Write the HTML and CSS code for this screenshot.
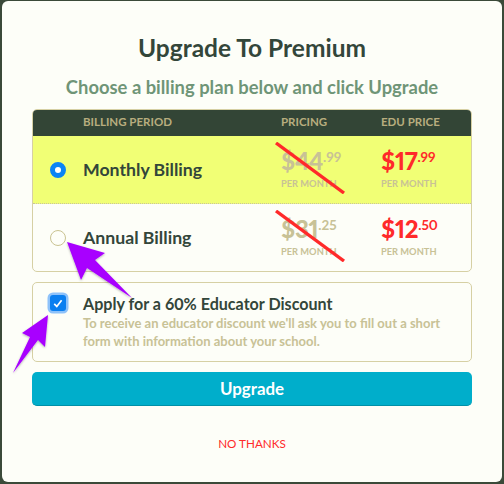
FILE: index.html
```html
<!DOCTYPE html>
<html lang="en">
<head>
    <meta charset="UTF-8">
    <meta name="viewport" content="width=device-width, initial-scale=1.0">
    <title>Upgrade To Premium</title>
    <link rel="stylesheet" href="styles.css">
</head>
<body>
    <div class="modal">
        <h1 class="modal-title">Upgrade To Premium</h1>
        <h2 class="modal-subtitle">Choose a billing plan below and click Upgrade</h2>

        <div class="plans">
            <div class="plans-head plan-grid">
                <span class="col-period">BILLING PERIOD</span>
                <span>PRICING</span>
                <span>EDU PRICE</span>
            </div>
            <div class="plan plan-grid selected">
                <span class="radio"></span>
                <span class="plan-name">Monthly Billing</span>
                <div class="price old">
                    <div class="amount">$44<sup>.99</sup></div>
                    <div class="per">PER MONTH</div>
                    <svg class="slash" width="70" height="52" viewBox="0 0 70 52"><path d="M1 1 L69 51" stroke="#ff2a2a" stroke-width="3.4"/></svg>
                </div>
                <div class="price">
                    <div class="amount">$17<sup>.99</sup></div>
                    <div class="per">PER MONTH</div>
                </div>
            </div>
            <div class="plan plan-grid">
                <span class="radio"></span>
                <span class="plan-name">Annual Billing</span>
                <div class="price old">
                    <div class="amount">$31<sup>.25</sup></div>
                    <div class="per">PER MONTH</div>
                    <svg class="slash" width="70" height="52" viewBox="0 0 70 52"><path d="M1 1 L69 51" stroke="#ff2a2a" stroke-width="3.4"/></svg>
                </div>
                <div class="price">
                    <div class="amount">$12<sup>.50</sup></div>
                    <div class="per">PER MONTH</div>
                </div>
            </div>
        </div>

        <div class="discount">
            <span class="checkbox">
                <svg width="10" height="9" viewBox="0 0 10 9"><path d="M1.2 4.8 L3.8 7.4 L8.6 1.2" fill="none" stroke="#fff" stroke-width="1.7"/></svg>
            </span>
            <div>
                <div class="discount-title">Apply for a 60% Educator Discount</div>
                <p class="discount-text">To receive an educator discount we'll ask you to fill out a short form with information about your school.</p>
            </div>
        </div>

        <button class="btn-upgrade">Upgrade</button>
        <a class="no-thanks">NO THANKS</a>
    </div>

    <!-- annotation arrows drawn on top of the screenshot -->
    <svg class="arrows" width="504" height="484" viewBox="0 0 504 484">
        <defs>
            <filter id="arrow-shadow" x="-20%" y="-20%" width="140%" height="140%">
                <feDropShadow dx="0" dy="1" stdDeviation="1" flood-color="#000" flood-opacity="0.3"/>
            </filter>
        </defs>
        <g fill="#a800ff" filter="url(#arrow-shadow)">
            <path d="M67 242 L105 253 L95 260 L132 298 L87 268 L81 280 Z"/>
            <path d="M48 315 L22 333 L30 337 L13 373 L38 340 L45 347 Z"/>
        </g>
    </svg>
</body>
</html>
```

FILE: styles.css
```css
* {
    box-sizing: border-box;
}
html, body {
    height: 100%;
}
body {
    margin: 0;
    padding: 1px 2px 2px 2px;
    background-color: #3b4a39;
    font-family: Lato, "Open Sans", Arial, sans-serif;
    overflow: hidden;
}
.modal {
    height: 100%;
    background-color: #fdfef8;
    border-radius: 6px;
    padding: 34px 30px 0 30px;
}
.modal-title {
    margin: 0;
    font-size: 24.5px;
    line-height: 26px;
    font-weight: 700;
    color: #33463a;
    text-align: center;
}
.modal-subtitle {
    margin: 15px 0 0 0;
    font-size: 18.4px;
    line-height: 22px;
    font-weight: 700;
    color: #6f9577;
    text-align: center;
}
.plans {
    margin-top: 11px;
    border: 1px solid #d6d0a4;
    border-radius: 5px;
    overflow: hidden;
}
.plan-grid {
    display: grid;
    grid-template-columns: 50px 198px 100px 1fr;
    align-items: center;
}
.plans-head {
    height: 26px;
    padding-bottom: 3px;
    background-color: #334536;
    color: #b8ad7e;
    font-size: 11.5px;
    font-weight: 700;
    grid-template-columns: 248px 100px 1fr;
}
.col-period {
    padding-left: 50px;
}
.plan {
    height: 67px;
    position: relative;
}
.plan.selected {
    height: 68px;
    background-color: #f1ff75;
    border-bottom: 1px dotted #c9c49a;
}
.radio {
    width: 16px;
    height: 16px;
    margin-left: 17px;
    border: 1px solid #c9c392;
    border-radius: 50%;
    background-color: #fdfef8;
}
.selected .radio {
    border: 5px solid #0a84f5;
    background-color: #fff;
}
.plan-name {
    font-size: 17.7px;
    font-weight: 700;
    color: #33463a;
}
.price {
    position: relative;
}
.amount {
    font-size: 24px;
    line-height: 24px;
    font-weight: 900;
    letter-spacing: -0.3px;
    color: #ff2a2a;
    font-variant-numeric: proportional-nums;
}
.amount sup {
    font-size: 13.5px;
    line-height: 0;
    font-weight: 700;
    letter-spacing: 0;
    vertical-align: 8px;
}
.old .amount {
    color: #c8c296;
}
.per {
    margin-top: 5px;
    font-size: 9.3px;
    line-height: 12px;
    font-weight: 700;
    color: #c8c296;
}
.slash {
    position: absolute;
    left: -6px;
    top: -7px;
}
.discount {
    display: flex;
    margin-top: 10px;
    height: 80px;
    padding: 11px 17px 0 17px;
    border: 1px solid #d6d0a4;
    border-radius: 5px;
}
.checkbox {
    flex: none;
    display: flex;
    align-items: center;
    justify-content: center;
    width: 16px;
    height: 16px;
    margin-top: 1px;
    margin-right: 17px;
    background-color: #0a7ff0;
    border-radius: 3px;
    box-shadow: 0 0 0 2.5px #8ec2fa;
}
.discount-title {
    font-size: 16.1px;
    line-height: 19px;
    font-weight: 700;
    color: #33463a;
}
.discount-text {
    margin: 1px 0 0 0;
    font-size: 13px;
    line-height: 18px;
    font-weight: 700;
    color: #c8c296;
}
.btn-upgrade {
    display: block;
    width: 100%;
    height: 34px;
    margin-top: 10px;
    border: none;
    border-bottom: 1px solid #0090a8;
    border-radius: 5px;
    background-color: #00aecb;
    color: #fff;
    font-family: inherit;
    font-size: 16.9px;
    font-weight: 700;
}
.no-thanks {
    display: block;
    margin-top: 29px;
    font-size: 11.7px;
    line-height: 16px;
    color: #ff2a2a;
    text-align: center;
}
.arrows {
    position: absolute;
    left: 0;
    top: 0;
    pointer-events: none;
}
```
